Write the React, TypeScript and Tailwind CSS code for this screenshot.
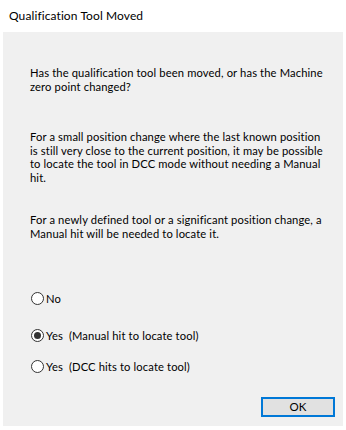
import React, { useState } from 'react';

const Radio: React.FC<{ checked: boolean; label: React.ReactNode; onClick: () => void }> = ({ checked, label, onClick }) => (
  <button onClick={onClick} className="flex items-center text-left leading-[13.5px]">
    <span className="flex items-center justify-center w-[13px] h-[13px] rounded-full border border-[#333333] bg-white">
      {checked && <span className="w-[7px] h-[7px] rounded-full bg-[#333333]" />}
    </span>
    <span className="ml-[2px]">{label}</span>
  </button>
);

const App: React.FC = () => {
  const [choice, setChoice] = useState('manual');

  return (
    <div className="w-[346px] h-[430px] bg-white flex flex-col text-[#000] font-['Lato',sans-serif]">
      <div className="h-[32px] flex items-center pl-[9px] text-[12px] tracking-[0.1px]">Qualification Tool Moved</div>
      <div className="mx-[3px] h-[394px] bg-[#f0f0f0] pl-[27px] pt-[34px] text-[11.2px] leading-[13.5px] tracking-[0.13px] whitespace-nowrap">
        <p>
          Has the qualification tool been moved, or has the Machine
          <br />
          zero point changed?
        </p>
        <p className="mt-[37px]">
          For a small position change where the last known position
          <br />
          is still very close to the current position, it may be possible
          <br />
          to locate the tool in DCC mode without needing a Manual
          <br />
          hit.
        </p>
        <p className="mt-[29px]">
          For a newly defined tool or a significant position change, a
          <br />
          Manual hit will be needed to locate it.
        </p>
        <div className="mt-[52px] flex flex-col items-start pl-[1px]">
          <Radio checked={choice === 'no'} onClick={() => setChoice('no')} label="No" />
          <div className="mt-[23px]">
            <Radio checked={choice === 'manual'} onClick={() => setChoice('manual')} label={<>Yes&nbsp;&nbsp;(Manual hit to locate tool)</>} />
          </div>
          <div className="mt-[18px]">
            <Radio checked={choice === 'dcc'} onClick={() => setChoice('dcc')} label={<>Yes&nbsp;&nbsp;(DCC hits to locate tool)</>} />
          </div>
        </div>
        <div className="flex justify-end mt-[23px] pr-[8px]">
          <button className="w-[74px] h-[20px] border-2 border-[#0078d7] bg-[#e1e1e1] text-[11.5px] leading-none">OK</button>
        </div>
      </div>
    </div>
  );
};

export default App;
